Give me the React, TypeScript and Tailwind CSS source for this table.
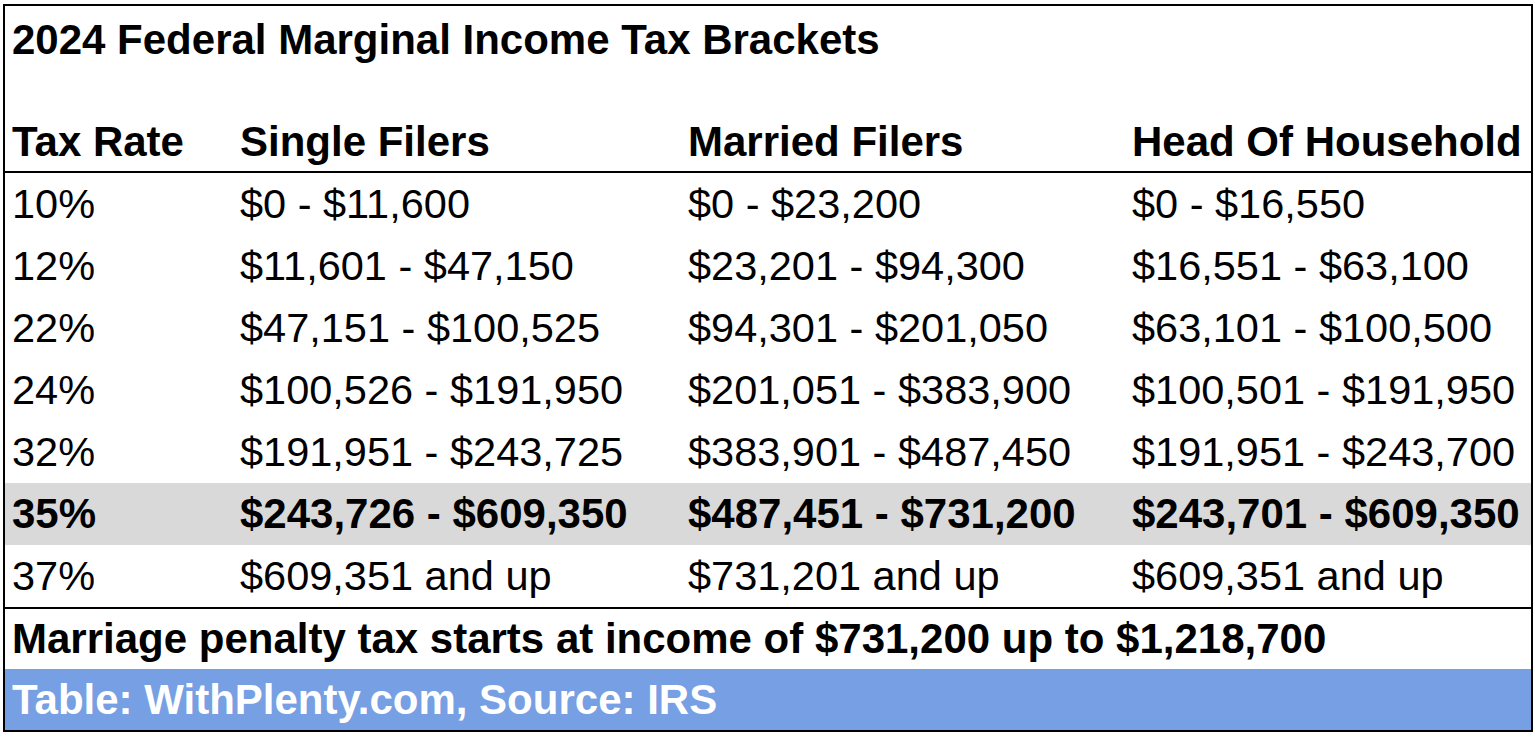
const rows = [
  ["10%", "$0 - $11,600", "$0 - $23,200", "$0 - $16,550"],
  ["12%", "$11,601 - $47,150", "$23,201 - $94,300", "$16,551 - $63,100"],
  ["22%", "$47,151 - $100,525", "$94,301 - $201,050", "$63,101 - $100,500"],
  ["24%", "$100,526 - $191,950", "$201,051 - $383,900", "$100,501 - $191,950"],
  ["32%", "$191,951 - $243,725", "$383,901 - $487,450", "$191,951 - $243,700"],
  ["35%", "$243,726 - $609,350", "$487,451 - $731,200", "$243,701 - $609,350"],
  ["37%", "$609,351 and up", "$731,201 and up", "$609,351 and up"],
];

const cols = "grid grid-cols-[228px_448px_444px_1fr] px-[7px]";

export default function App() {
  return (
    <div className="w-[1535px] h-[737px] bg-white pt-[4px] pl-[3px] font-['Liberation_Sans',Arial,sans-serif] text-black">
      <div className="w-[1530px] border-2 border-black">
        <div className="h-[68px] flex items-center px-[7px] text-[42px] font-bold leading-none">
          2024 Federal Marginal Income Tax Brackets
        </div>
        <div className="h-[38px]" />
        <div className={`${cols} h-[61px] items-center text-[42px] font-bold leading-none border-b-2 border-black`}>
          <div>Tax Rate</div>
          <div>Single Filers</div>
          <div>Married Filers</div>
          <div className="whitespace-nowrap">Head Of Household</div>
        </div>
        {rows.map((r) => {
          const hl = r[0] === "35%";
          return (
            <div
              key={r[0]}
              className={`${cols} h-[62px] items-center leading-none whitespace-nowrap ${
                hl ? "bg-[#d9d9d9] font-bold text-[42px]" : "text-[41.5px]"
              }`}
            >
              {r.map((c, i) => (
                <div key={i}>{c}</div>
              ))}
            </div>
          );
        })}
        <div className="h-[62px] flex items-center px-[7px] text-[42px] font-bold leading-none border-t-2 border-black">
          Marriage penalty tax starts at income of $731,200 up to $1,218,700
        </div>
        <div className="h-[61px] flex items-center px-[7px] text-[42px] font-bold leading-none bg-[#779fe3] text-white">
          Table: WithPlenty.com, Source: IRS
        </div>
      </div>
    </div>
  );
}
